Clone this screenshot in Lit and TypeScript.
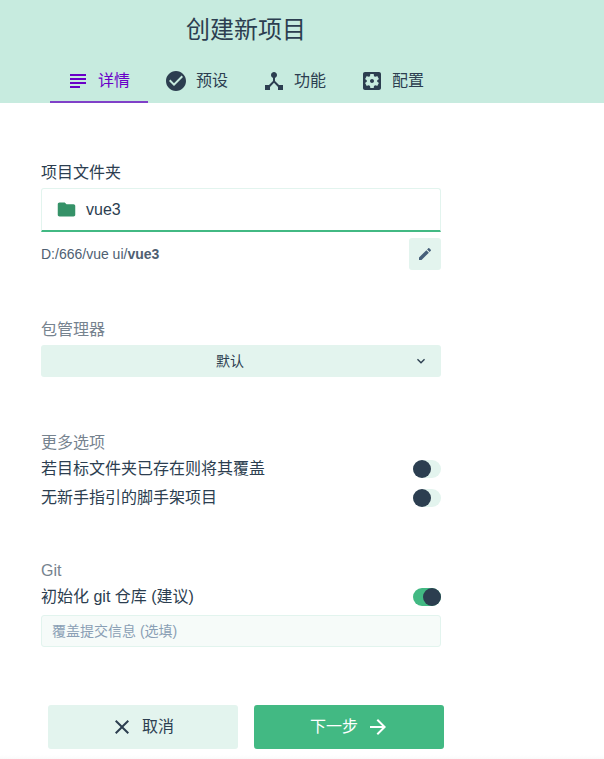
import { LitElement, html, css } from "lit";
import { customElement } from "lit/decorators.js";

@customElement("app-root")
export class AppRoot extends LitElement {
  static styles = css`
    :host {
      display: block;
      width: 604px;
      height: 759px;
      overflow: hidden;
      background: #fff;
      color: #2c3e50;
      font-family: "Liberation Sans", "Noto Sans CJK SC", sans-serif;
      font-size: 16px;
      line-height: 20px;
    }
    .head {
      height: 103px;
      background: #c7ebdf;
      box-sizing: border-box;
      padding-top: 15px;
    }
    .title {
      width: 492px;
      text-align: center;
      font-size: 24px;
      line-height: 30px;
    }
    .tabs {
      display: flex;
      margin: 14px 0 0 50px;
    }
    .tab {
      width: 98px;
      height: 44px;
      box-sizing: border-box;
      display: flex;
      align-items: center;
      justify-content: center;
      gap: 8px;
      padding-right: 2px;
    }
    .tab svg { width: 24px; height: 24px; fill: #2c3e50; flex: none; }
    .tab.on { color: #6a00c8; border-bottom: 2px solid #8040c8; padding-top: 2px; }
    .tab.on svg { fill: #6a00c8; }
    .form {
      width: 400px;
      margin-left: 41px;
    }
    .label { line-height: 20px; }
    .muted { color: #76838f; }
    .l1 { padding-top: 60px; }
    .input {
      height: 44px;
      margin-top: 5px;
      box-sizing: border-box;
      border: 1px solid #e2f4ee;
      border-bottom: 2px solid #42b983;
      border-radius: 3px 3px 0 0;
      display: flex;
      align-items: center;
      padding-left: 14px;
      gap: 9px;
    }
    .input svg { width: 21px; height: 21px; fill: #359268; }
    .path {
      display: flex;
      align-items: center;
      justify-content: space-between;
      margin-top: 6px;
      font-size: 14px;
      color: #4f6072;
    }
    .edit {
      width: 32px;
      height: 32px;
      border-radius: 3px;
      background: #e3f4ee;
      display: flex;
      align-items: center;
      justify-content: center;
    }
    .edit svg { width: 16px; height: 16px; fill: #46607a; }
    .l2 { margin-top: 50px; }
    .select {
      height: 32px;
      margin-top: 5px;
      border-radius: 3px;
      background: #e3f4ee;
      display: flex;
      align-items: center;
      justify-content: center;
      position: relative;
      font-size: 14px;
      padding-right: 22px;
    }
    .select svg { position: absolute; right: 12px; top: 8px; width: 16px; height: 16px; fill: #2c3e50; }
    .l3 { margin-top: 56px; }
    .row {
      height: 29px;
      display: flex;
      align-items: center;
      justify-content: space-between;
    }
    .row span { padding-top: 1px; }
    .first { margin-top: 1px; }
    .sw {
      width: 28px;
      height: 18px;
      border-radius: 9px;
      background: #e3f4ee;
      display: flex;
    }
    .sw i { width: 18px; height: 18px; border-radius: 50%; background: #2c3e50; }
    .sw.on { background: #42b983; justify-content: flex-end; }
    .l4 { margin-top: 49px; }
    .msg {
      height: 32px;
      margin-top: 4px;
      box-sizing: border-box;
      border: 1px solid #e2f4ee;
      border-radius: 3px;
      background: #f6fbf9;
      color: #8a9fb5;
      font-size: 14px;
      display: flex;
      align-items: center;
      padding-left: 10px;
    }
    .actions {
      display: flex;
      gap: 16px;
      margin: 58px 0 0 48px;
    }
    .btn {
      width: 190px;
      height: 44px;
      border-radius: 3px;
      display: flex;
      align-items: center;
      justify-content: center;
      gap: 8px;
      box-sizing: border-box;
    }
    .btn svg { width: 24px; height: 24px; }
    .cancel { background: #e3f4ee; padding-right: 2px; }
    .cancel svg { fill: #2c3e50; }
    .next { background: #42b983; color: #fff; padding-left: 2px; }
    .next svg { fill: #fff; }
    .fade {
      height: 4px;
      margin-top: 6px;
      background: linear-gradient(#fff, #fafafa);
    }
  `;

  render() {
    return html`
      <div class="head">
        <div class="title">创建新项目</div>
        <div class="tabs">
          <div class="tab on">
            <svg viewBox="0 0 24 24"><path d="M14 17H4v2h10v-2zm6-8H4v2h16V9zM4 15h16v-2H4v2zM4 5v2h16V5H4z"/></svg>
            <span>详情</span>
          </div>
          <div class="tab">
            <svg viewBox="0 0 24 24"><path d="M12 2C6.48 2 2 6.48 2 12s4.48 10 10 10 10-4.48 10-10S17.52 2 12 2zm-2 15l-5-5 1.41-1.41L10 14.17l7.59-7.59L19 8l-9 9z"/></svg>
            <span>预设</span>
          </div>
          <div class="tab">
            <svg viewBox="0 0 24 24"><path d="M17 16l-4-4V8.82C14.16 8.4 15 7.3 15 6c0-1.66-1.34-3-3-3S9 4.34 9 6c0 1.3.84 2.4 2 2.82V12l-4 4H3v5h5v-3.05l4-4.2 4 4.2V21h5v-5h-4z"/></svg>
            <span>功能</span>
          </div>
          <div class="tab">
            <svg viewBox="0 0 24 24"><path d="M12 10c-1.1 0-2 .9-2 2s.9 2 2 2 2-.9 2-2-.9-2-2-2zm7-7H5c-1.11 0-2 .9-2 2v14c0 1.1.89 2 2 2h14c1.11 0 2-.9 2-2V5c0-1.1-.89-2-2-2zm-1.75 9c0 .23-.02.46-.05.68l1.48 1.16c.13.11.17.3.08.45l-1.4 2.42c-.09.15-.27.21-.43.15l-1.74-.7c-.36.28-.76.51-1.18.69l-.26 1.85c-.03.17-.18.3-.35.3h-2.8c-.17 0-.32-.13-.35-.29l-.26-1.85c-.43-.18-.82-.41-1.18-.69l-1.74.7c-.16.06-.34 0-.43-.15l-1.4-2.42c-.09-.15-.05-.34.08-.45l1.48-1.16c-.03-.23-.05-.46-.05-.69 0-.23.02-.46.05-.68l-1.48-1.16c-.13-.11-.17-.3-.08-.45l1.4-2.42c.09-.15.27-.21.43-.15l1.74.7c.36-.28.76-.51 1.18-.69l.26-1.85c.03-.17.18-.3.35-.3h2.8c.17 0 .32.13.35.29l.26 1.85c.43.18.82.41 1.18.69l1.74-.7c.16-.06.34 0 .43.15l1.4 2.42c.09.15.05.34-.08.45l-1.48 1.16c.03.23.05.46.05.69z"/></svg>
            <span>配置</span>
          </div>
        </div>
      </div>
      <div class="form">
        <div class="label l1">项目文件夹</div>
        <div class="input">
          <svg viewBox="0 0 24 24"><path d="M10 4H4c-1.1 0-1.99.9-1.99 2L2 18c0 1.1.9 2 2 2h16c1.1 0 2-.9 2-2V8c0-1.1-.9-2-2-2h-8l-2-2z"/></svg>
          <span>vue3</span>
        </div>
        <div class="path">
          <span>D:/666/vue ui/<b>vue3</b></span>
          <div class="edit">
            <svg viewBox="0 0 24 24"><path d="M3 17.25V21h3.75L17.81 9.94l-3.75-3.75L3 17.25zM20.71 7.04c.39-.39.39-1.02 0-1.41l-2.34-2.34c-.39-.39-1.02-.39-1.41 0l-1.83 1.83 3.75 3.75 1.83-1.83z"/></svg>
          </div>
        </div>
        <div class="label muted l2">包管理器</div>
        <div class="select">
          <span>默认</span>
          <svg viewBox="0 0 24 24"><path d="M7.41 8.59L12 13.17l4.59-4.58L18 10l-6 6-6-6 1.41-1.41z"/></svg>
        </div>
        <div class="label muted l3">更多选项</div>
        <div class="row first"><span>若目标文件夹已存在则将其覆盖</span><div class="sw"><i></i></div></div>
        <div class="row"><span>无新手指引的脚手架项目</span><div class="sw"><i></i></div></div>
        <div class="label muted l4">Git</div>
        <div class="row first"><span>初始化 git 仓库 (建议)</span><div class="sw on"><i></i></div></div>
        <div class="msg">覆盖提交信息 (选填)</div>
      </div>
      <div class="actions">
        <div class="btn cancel">
          <svg viewBox="0 0 24 24"><path d="M19 6.41L17.59 5 12 10.59 6.41 5 5 6.41 10.59 12 5 17.59 6.41 19 12 13.41 17.59 19 19 17.59 13.41 12z"/></svg>
          <span>取消</span>
        </div>
        <div class="btn next">
          <span>下一步</span>
          <svg viewBox="0 0 24 24"><path d="M12 4l-1.41 1.41L16.17 11H4v2h12.17l-5.58 5.59L12 20l8-8z"/></svg>
        </div>
      </div>
      <div class="fade"></div>
    `;
  }
}
